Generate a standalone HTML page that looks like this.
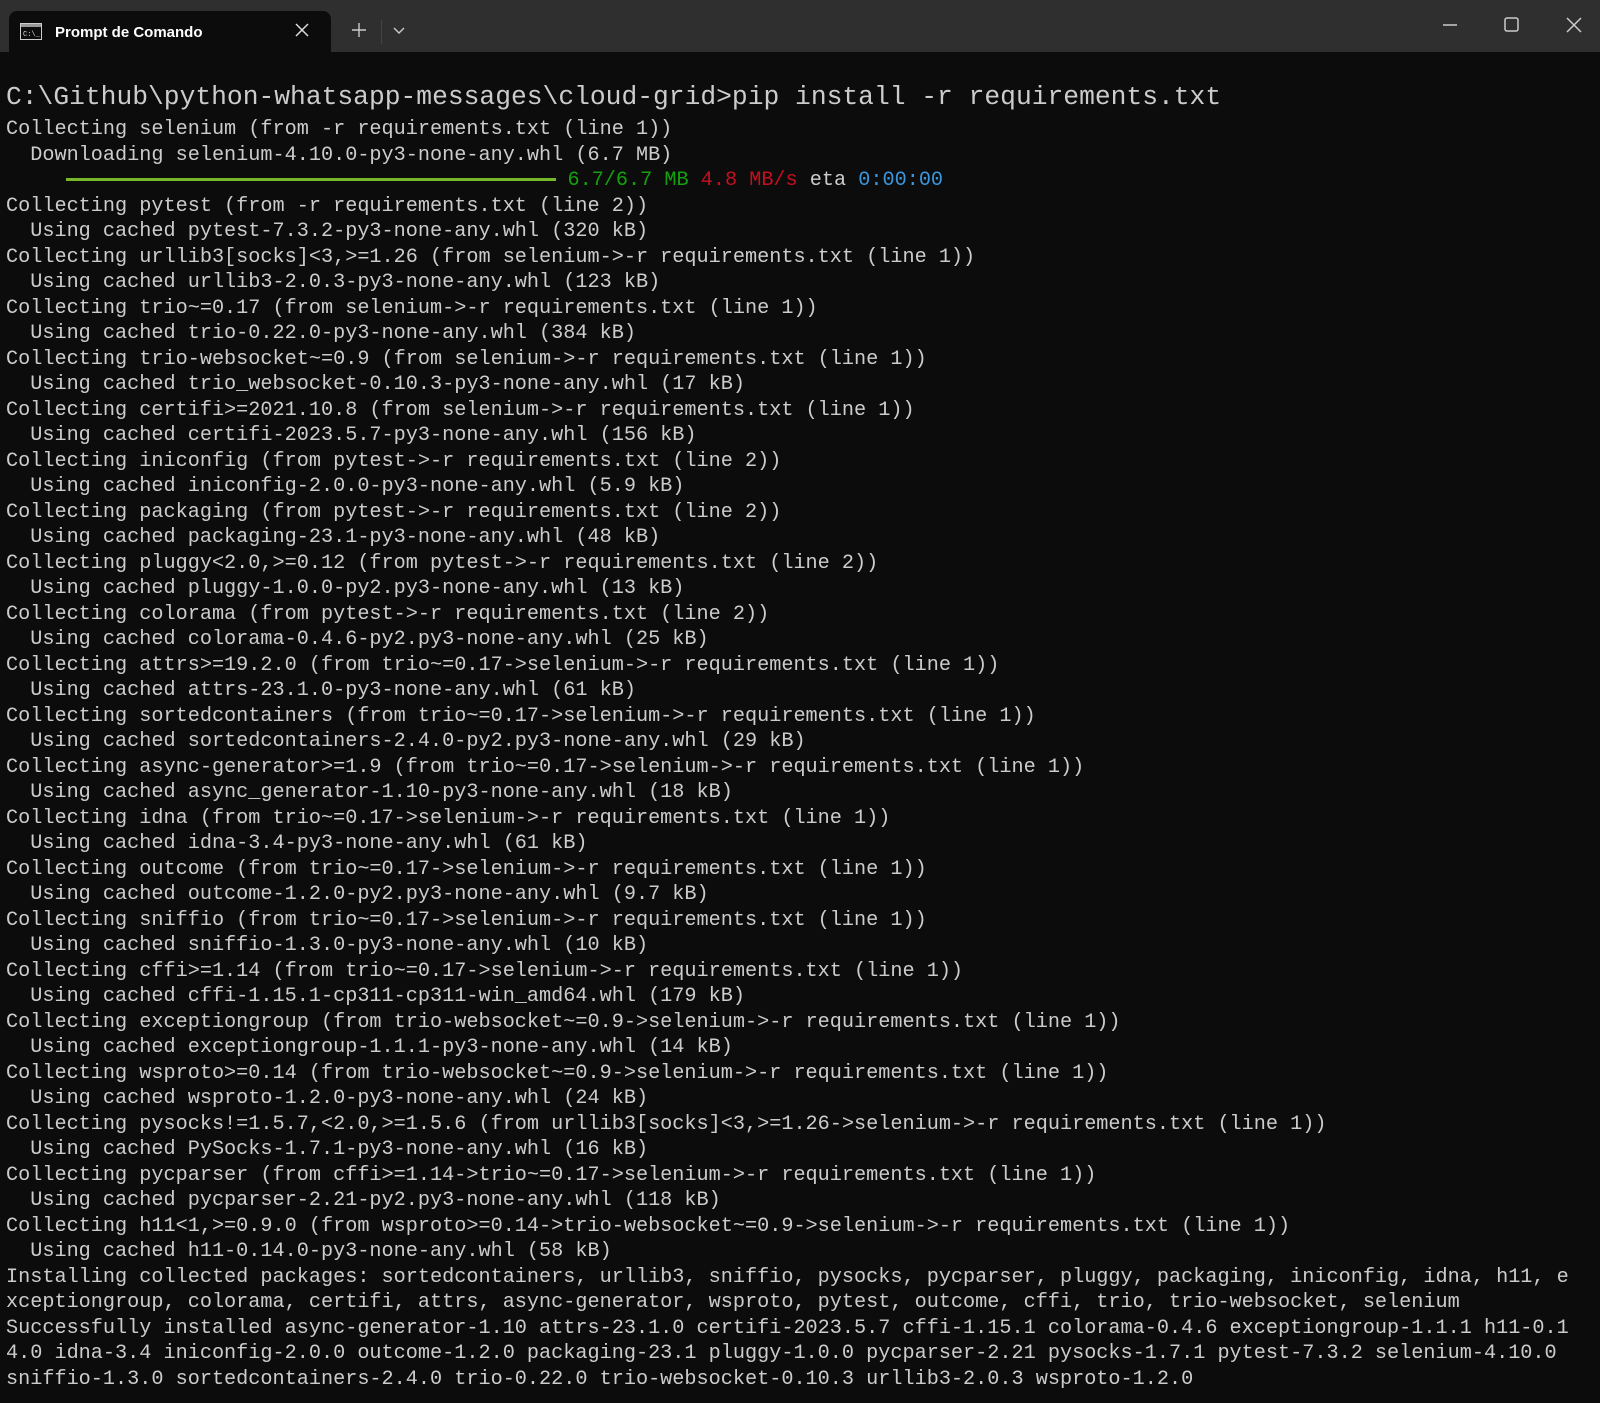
<!DOCTYPE html>
<html><head><meta charset="utf-8"><style>
html,body{margin:0;padding:0;background:#0c0c0c;width:1600px;height:1403px;overflow:hidden}
.bar{position:absolute;left:0;top:0;width:1600px;height:52px;background:#2f2f2f}
.tab{position:absolute;left:9px;top:11px;width:322px;height:41px;background:#0c0c0c;border-radius:8px 8px 0 0}
.tt{position:absolute;left:55px;top:24px;font:bold 15px "Liberation Sans",sans-serif;color:#fff}
.mono{font-family:"Liberation Mono",monospace;color:#cccccc;white-space:pre;position:absolute;left:6px}
.prompt{top:81px;font-size:26.3px;line-height:32px}
.out{top:117px;font-size:20.2px;line-height:25.5px;margin:0}
.g{color:#13a10e}.r{color:#c50f1f}.b{color:#3a96dd}
.pb{display:inline-block;width:490px;height:3px;background:#76b82a;vertical-align:middle;margin-left:12px;margin-right:11px}
</style></head><body>
<div class="bar"></div>
<div class="tab"></div>
<svg style="position:absolute;left:20px;top:23px" width="22" height="17" viewBox="0 0 22 17"><rect x="0.5" y="0.5" width="21" height="16" fill="none" stroke="#ccc"/><rect x="1" y="1" width="20" height="3" fill="#999"/><text x="3" y="13" font-size="7" fill="#ddd" font-family="Liberation Mono">C:\_</text></svg>
<div class="tt">Prompt de Comando</div>
<svg style="position:absolute;left:295px;top:23px" width="14" height="14"><path d="M1 1L13 13M13 1L1 13" stroke="#ddd" stroke-width="1.5"/></svg>
<svg style="position:absolute;left:352px;top:23px" width="14" height="14"><path d="M7 0V14M0 7H14" stroke="#ccc" stroke-width="1.4"/></svg>
<div style="position:absolute;left:381px;top:20px;width:1px;height:24px;background:#444"></div>
<svg style="position:absolute;left:393px;top:27px" width="12" height="8"><path d="M1 1L6 6L11 1" stroke="#ccc" stroke-width="1.4" fill="none"/></svg>
<svg style="position:absolute;left:1442px;top:23px" width="16" height="4"><path d="M1 2H15" stroke="#ccc" stroke-width="1.5"/></svg>
<svg style="position:absolute;left:1504px;top:17px" width="16" height="16"><rect x="1" y="1" width="13" height="13" rx="2" fill="none" stroke="#ccc" stroke-width="1.5"/></svg>
<svg style="position:absolute;left:1566px;top:17px" width="16" height="16"><path d="M1 1L15 15M15 1L1 15" stroke="#ccc" stroke-width="1.5"/></svg>
<div class="mono prompt">C:\Github\python-whatsapp-messages\cloud-grid&gt;pip install -r requirements.txt</div>
<pre class="mono out">Collecting selenium (from -r requirements.txt (line 1))
  Downloading selenium-4.10.0-py3-none-any.whl (6.7 MB)
    <span class="pb"></span><span class="g">6.7/6.7 MB</span> <span class="r">4.8 MB/s</span> eta <span class="b">0:00:00</span>
Collecting pytest (from -r requirements.txt (line 2))
  Using cached pytest-7.3.2-py3-none-any.whl (320 kB)
Collecting urllib3[socks]&lt;3,&gt;=1.26 (from selenium-&gt;-r requirements.txt (line 1))
  Using cached urllib3-2.0.3-py3-none-any.whl (123 kB)
Collecting trio~=0.17 (from selenium-&gt;-r requirements.txt (line 1))
  Using cached trio-0.22.0-py3-none-any.whl (384 kB)
Collecting trio-websocket~=0.9 (from selenium-&gt;-r requirements.txt (line 1))
  Using cached trio_websocket-0.10.3-py3-none-any.whl (17 kB)
Collecting certifi&gt;=2021.10.8 (from selenium-&gt;-r requirements.txt (line 1))
  Using cached certifi-2023.5.7-py3-none-any.whl (156 kB)
Collecting iniconfig (from pytest-&gt;-r requirements.txt (line 2))
  Using cached iniconfig-2.0.0-py3-none-any.whl (5.9 kB)
Collecting packaging (from pytest-&gt;-r requirements.txt (line 2))
  Using cached packaging-23.1-py3-none-any.whl (48 kB)
Collecting pluggy&lt;2.0,&gt;=0.12 (from pytest-&gt;-r requirements.txt (line 2))
  Using cached pluggy-1.0.0-py2.py3-none-any.whl (13 kB)
Collecting colorama (from pytest-&gt;-r requirements.txt (line 2))
  Using cached colorama-0.4.6-py2.py3-none-any.whl (25 kB)
Collecting attrs&gt;=19.2.0 (from trio~=0.17-&gt;selenium-&gt;-r requirements.txt (line 1))
  Using cached attrs-23.1.0-py3-none-any.whl (61 kB)
Collecting sortedcontainers (from trio~=0.17-&gt;selenium-&gt;-r requirements.txt (line 1))
  Using cached sortedcontainers-2.4.0-py2.py3-none-any.whl (29 kB)
Collecting async-generator&gt;=1.9 (from trio~=0.17-&gt;selenium-&gt;-r requirements.txt (line 1))
  Using cached async_generator-1.10-py3-none-any.whl (18 kB)
Collecting idna (from trio~=0.17-&gt;selenium-&gt;-r requirements.txt (line 1))
  Using cached idna-3.4-py3-none-any.whl (61 kB)
Collecting outcome (from trio~=0.17-&gt;selenium-&gt;-r requirements.txt (line 1))
  Using cached outcome-1.2.0-py2.py3-none-any.whl (9.7 kB)
Collecting sniffio (from trio~=0.17-&gt;selenium-&gt;-r requirements.txt (line 1))
  Using cached sniffio-1.3.0-py3-none-any.whl (10 kB)
Collecting cffi&gt;=1.14 (from trio~=0.17-&gt;selenium-&gt;-r requirements.txt (line 1))
  Using cached cffi-1.15.1-cp311-cp311-win_amd64.whl (179 kB)
Collecting exceptiongroup (from trio-websocket~=0.9-&gt;selenium-&gt;-r requirements.txt (line 1))
  Using cached exceptiongroup-1.1.1-py3-none-any.whl (14 kB)
Collecting wsproto&gt;=0.14 (from trio-websocket~=0.9-&gt;selenium-&gt;-r requirements.txt (line 1))
  Using cached wsproto-1.2.0-py3-none-any.whl (24 kB)
Collecting pysocks!=1.5.7,&lt;2.0,&gt;=1.5.6 (from urllib3[socks]&lt;3,&gt;=1.26-&gt;selenium-&gt;-r requirements.txt (line 1))
  Using cached PySocks-1.7.1-py3-none-any.whl (16 kB)
Collecting pycparser (from cffi&gt;=1.14-&gt;trio~=0.17-&gt;selenium-&gt;-r requirements.txt (line 1))
  Using cached pycparser-2.21-py2.py3-none-any.whl (118 kB)
Collecting h11&lt;1,&gt;=0.9.0 (from wsproto&gt;=0.14-&gt;trio-websocket~=0.9-&gt;selenium-&gt;-r requirements.txt (line 1))
  Using cached h11-0.14.0-py3-none-any.whl (58 kB)
Installing collected packages: sortedcontainers, urllib3, sniffio, pysocks, pycparser, pluggy, packaging, iniconfig, idna, h11, e
xceptiongroup, colorama, certifi, attrs, async-generator, wsproto, pytest, outcome, cffi, trio, trio-websocket, selenium
Successfully installed async-generator-1.10 attrs-23.1.0 certifi-2023.5.7 cffi-1.15.1 colorama-0.4.6 exceptiongroup-1.1.1 h11-0.1
4.0 idna-3.4 iniconfig-2.0.0 outcome-1.2.0 packaging-23.1 pluggy-1.0.0 pycparser-2.21 pysocks-1.7.1 pytest-7.3.2 selenium-4.10.0
sniffio-1.3.0 sortedcontainers-2.4.0 trio-0.22.0 trio-websocket-0.10.3 urllib3-2.0.3 wsproto-1.2.0</pre>
</body></html>
